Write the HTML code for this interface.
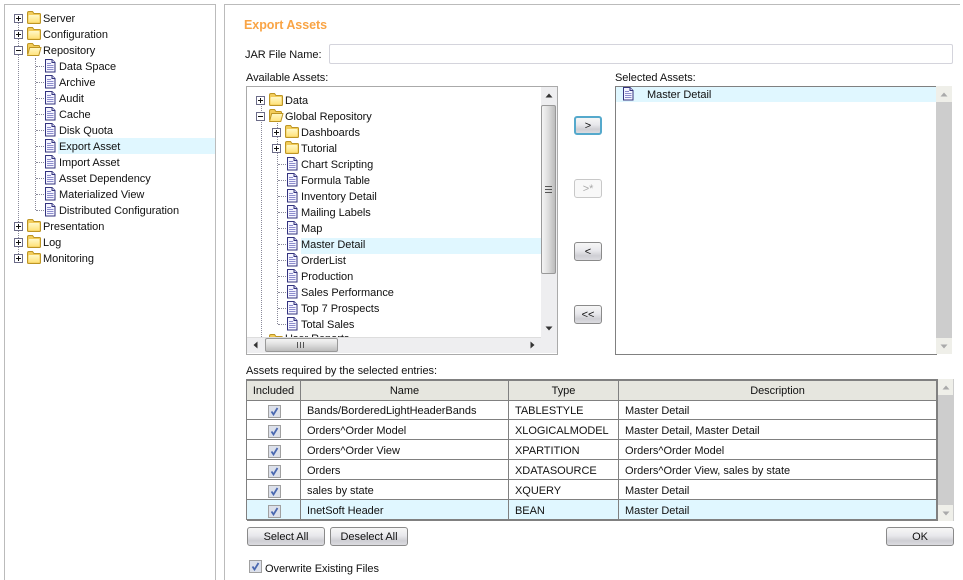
<!DOCTYPE html>
<html><head><meta charset="utf-8"><style>
*{box-sizing:border-box}
html,body{margin:0;padding:0;width:963px;height:580px;overflow:hidden;background:#fff}
body{position:relative;font:11px "Liberation Sans",sans-serif;color:#111;letter-spacing:-.04px}
.a,.t,.b,svg{position:absolute}
.t{white-space:nowrap;line-height:14px;height:14px;margin-top:1px}
.b{border:1px solid #8a8a8a;border-radius:3px;background:linear-gradient(#f6f6f6 0,#e8e8ec 45%,#cfcfd4 75%,#dcdce0 100%);text-align:center;line-height:19px}
.d{border-color:#c8c8c8;background:#f8f8f8;color:#aaa}
.v{border-left:1px dotted #8a8a9a;width:1px}
.h{border-top:1px dotted #8a8a9a;height:1px}
.th{background:#e6e6df;text-align:center;line-height:22px;height:20px;top:380px;white-space:nowrap}
.sb{background:#eeeef0}
.thumbV{background:linear-gradient(90deg,#f4f4f4,#e2e2e2 40%,#bcbcbc);border:1px solid #999;border-radius:2px}
.thumbH{background:linear-gradient(#f4f4f4,#e2e2e2 40%,#bcbcbc);border:1px solid #999;border-radius:2px}
.line{background:#808080}
</style></head><body>
<svg width="0" height="0" style="position:absolute"><defs>
<linearGradient id="gf" x1="0" y1="0" x2="0" y2="1"><stop offset="0" stop-color="#fff8c8"/><stop offset="1" stop-color="#ffe27a"/></linearGradient>
<g id="fo"><path d="M1.500 3Q1.500 1.500 3 1.500h3.500L8 3.500h5.500q1 0 1 1v8q0 1-1 1h-11q-1 0-1-1z" fill="#f2cc5a" stroke="#bd9524"/><rect x="2.500" y="5" width="11" height="7.500" rx="1" fill="url(#gf)"/></g>
<g id="fx"><path d="M1.500 12V3Q1.500 1.500 3 1.500h3.500L8 3.500h4.500q1 0 1 1v1" fill="#f2cc5a" stroke="#bd9524"/><path d="M1.500 13.500l2.200-8h11.300l-2.200 8z" fill="url(#gf)" stroke="#bd9524" stroke-linejoin="round"/></g>
<g id="dc"><path d="M.5.5h6.500l3 3v9.500H.5z" fill="#f4f4ff" stroke="#33337e"/><path d="M7 .5v3h3" fill="#dcdcf4" stroke="#33337e"/><path d="M2 4.500h4M2 6.500h6.500M2 8.500h6.500M2 10.500h6.500" stroke="#8c8ccc"/></g>
<g id="pl"><rect x=".5" y=".5" width="8" height="8" fill="#fff" stroke="#6c6c88"/><path d="M2 4.500h5M4.500 2v5" stroke="#111"/></g>
<g id="mi"><rect x=".5" y=".5" width="8" height="8" fill="#fff" stroke="#6c6c88"/><path d="M2 4.500h5" stroke="#111"/></g>
<g id="ck"><rect x=".5" y=".5" width="12" height="12" fill="#dce0ea" stroke="#a0a0a0"/><path d="M3.500 6.500l2 3L9.500 3" fill="none" stroke="#4a68b0" stroke-width="1.800"/></g>
</defs></svg>

<!-- left panel -->
<div class="a" style="left:4px;top:4px;width:212px;height:600px;border:1px solid #bbb"></div>
<div class="a" style="left:58px;top:138px;width:157px;height:16px;background:#e0f7ff"></div>
<div class="a v" style="left:18px;top:14px;height:244px"></div>
<div class="a v" style="left:35px;top:58px;height:152px"></div>
<div class="a h" style="left:36px;top:66px;width:8px"></div><div class="a h" style="left:36px;top:82px;width:8px"></div><div class="a h" style="left:36px;top:98px;width:8px"></div><div class="a h" style="left:36px;top:114px;width:8px"></div><div class="a h" style="left:36px;top:130px;width:8px"></div><div class="a h" style="left:36px;top:146px;width:8px"></div><div class="a h" style="left:36px;top:162px;width:8px"></div><div class="a h" style="left:36px;top:178px;width:8px"></div><div class="a h" style="left:36px;top:194px;width:8px"></div><div class="a h" style="left:36px;top:210px;width:8px"></div>

<svg style="left:14px;top:14px" width="9" height="9"><use href="#pl"/></svg><svg style="left:26px;top:10px" width="16" height="15"><use href="#fo"/></svg><div class="t" style="left:43px;top:11px">Server</div>
<svg style="left:14px;top:30px" width="9" height="9"><use href="#pl"/></svg><svg style="left:26px;top:26px" width="16" height="15"><use href="#fo"/></svg><div class="t" style="left:43px;top:27px">Configuration</div>
<svg style="left:14px;top:46px" width="9" height="9"><use href="#mi"/></svg><svg style="left:26px;top:42px" width="16" height="15"><use href="#fx"/></svg><div class="t" style="left:43px;top:43px">Repository</div>
<svg style="left:45px;top:59px" width="11" height="14"><use href="#dc"/></svg><div class="t" style="left:59px;top:59px">Data Space</div>
<svg style="left:45px;top:75px" width="11" height="14"><use href="#dc"/></svg><div class="t" style="left:59px;top:75px">Archive</div>
<svg style="left:45px;top:91px" width="11" height="14"><use href="#dc"/></svg><div class="t" style="left:59px;top:91px">Audit</div>
<svg style="left:45px;top:107px" width="11" height="14"><use href="#dc"/></svg><div class="t" style="left:59px;top:107px">Cache</div>
<svg style="left:45px;top:123px" width="11" height="14"><use href="#dc"/></svg><div class="t" style="left:59px;top:123px">Disk Quota</div>
<svg style="left:45px;top:139px" width="11" height="14"><use href="#dc"/></svg><div class="t" style="left:59px;top:139px">Export Asset</div>
<svg style="left:45px;top:155px" width="11" height="14"><use href="#dc"/></svg><div class="t" style="left:59px;top:155px">Import Asset</div>
<svg style="left:45px;top:171px" width="11" height="14"><use href="#dc"/></svg><div class="t" style="left:59px;top:171px">Asset Dependency</div>
<svg style="left:45px;top:187px" width="11" height="14"><use href="#dc"/></svg><div class="t" style="left:59px;top:187px">Materialized View</div>
<svg style="left:45px;top:203px" width="11" height="14"><use href="#dc"/></svg><div class="t" style="left:59px;top:203px">Distributed Configuration</div>
<svg style="left:14px;top:222px" width="9" height="9"><use href="#pl"/></svg><svg style="left:26px;top:218px" width="16" height="15"><use href="#fo"/></svg><div class="t" style="left:43px;top:219px">Presentation</div>
<svg style="left:14px;top:238px" width="9" height="9"><use href="#pl"/></svg><svg style="left:26px;top:234px" width="16" height="15"><use href="#fo"/></svg><div class="t" style="left:43px;top:235px">Log</div>
<svg style="left:14px;top:254px" width="9" height="9"><use href="#pl"/></svg><svg style="left:26px;top:250px" width="16" height="15"><use href="#fo"/></svg><div class="t" style="left:43px;top:251px">Monitoring</div>

<!-- right panel -->
<div class="a" style="left:224px;top:4px;width:736px;height:600px;border:1px solid #bbb;border-right:0"></div>
<div class="t" style="left:244px;top:17px;margin-top:0;font-size:12.500px;font-weight:bold;color:#f9a445;line-height:16px;height:16px">Export Assets</div>
<div class="t" style="left:245px;top:47px">JAR File Name:</div>
<div class="a" style="left:329px;top:44px;width:624px;height:20px;border:1px solid #d4d4dc;border-radius:2px"></div>

<div class="t" style="left:246px;top:70px">Available Assets:</div>
<div class="a" style="left:246px;top:86px;width:312px;height:269px;border:1px solid #aaa;overflow:hidden">
  <div class="a" style="left:54px;top:151px;width:240px;height:16px;background:#e0f7ff"></div>
</div>
<div class="a v" style="left:261px;top:96px;height:245px"></div>
<div class="a v" style="left:277px;top:120px;height:204px"></div>
<div class="a h" style="left:278px;top:164px;width:8px"></div><div class="a h" style="left:278px;top:180px;width:8px"></div><div class="a h" style="left:278px;top:196px;width:8px"></div><div class="a h" style="left:278px;top:212px;width:8px"></div><div class="a h" style="left:278px;top:228px;width:8px"></div><div class="a h" style="left:278px;top:244px;width:8px"></div><div class="a h" style="left:278px;top:260px;width:8px"></div><div class="a h" style="left:278px;top:276px;width:8px"></div><div class="a h" style="left:278px;top:292px;width:8px"></div><div class="a h" style="left:278px;top:308px;width:8px"></div><div class="a h" style="left:278px;top:324px;width:8px"></div>

<svg style="left:256px;top:96px" width="9" height="9"><use href="#pl"/></svg><svg style="left:268px;top:92px" width="16" height="15"><use href="#fo"/></svg><div class="t" style="left:285px;top:93px">Data</div>
<svg style="left:256px;top:112px" width="9" height="9"><use href="#mi"/></svg><svg style="left:268px;top:108px" width="16" height="15"><use href="#fx"/></svg><div class="t" style="left:285px;top:109px">Global Repository</div>
<svg style="left:272px;top:128px" width="9" height="9"><use href="#pl"/></svg><svg style="left:284px;top:124px" width="16" height="15"><use href="#fo"/></svg><div class="t" style="left:301px;top:125px">Dashboards</div>
<svg style="left:272px;top:144px" width="9" height="9"><use href="#pl"/></svg><svg style="left:284px;top:140px" width="16" height="15"><use href="#fo"/></svg><div class="t" style="left:301px;top:141px">Tutorial</div>
<svg style="left:287px;top:157px" width="11" height="14"><use href="#dc"/></svg><div class="t" style="left:301px;top:157px">Chart Scripting</div>
<svg style="left:287px;top:173px" width="11" height="14"><use href="#dc"/></svg><div class="t" style="left:301px;top:173px">Formula Table</div>
<svg style="left:287px;top:189px" width="11" height="14"><use href="#dc"/></svg><div class="t" style="left:301px;top:189px">Inventory Detail</div>
<svg style="left:287px;top:205px" width="11" height="14"><use href="#dc"/></svg><div class="t" style="left:301px;top:205px">Mailing Labels</div>
<svg style="left:287px;top:221px" width="11" height="14"><use href="#dc"/></svg><div class="t" style="left:301px;top:221px">Map</div>
<svg style="left:287px;top:237px" width="11" height="14"><use href="#dc"/></svg><div class="t" style="left:301px;top:237px">Master Detail</div>
<svg style="left:287px;top:253px" width="11" height="14"><use href="#dc"/></svg><div class="t" style="left:301px;top:253px">OrderList</div>
<svg style="left:287px;top:269px" width="11" height="14"><use href="#dc"/></svg><div class="t" style="left:301px;top:269px">Production</div>
<svg style="left:287px;top:285px" width="11" height="14"><use href="#dc"/></svg><div class="t" style="left:301px;top:285px">Sales Performance</div>
<svg style="left:287px;top:301px" width="11" height="14"><use href="#dc"/></svg><div class="t" style="left:301px;top:301px">Top 7 Prospects</div>
<svg style="left:287px;top:317px" width="11" height="14"><use href="#dc"/></svg><div class="t" style="left:301px;top:317px">Total Sales</div>
<svg style="left:268px;top:333px" width="16" height="4" viewBox="0 0 16 4"><use href="#fo"/></svg>
<div class="t" style="left:285px;top:331px;height:5px;overflow:hidden">User Reports</div>

<!-- tree scrollbars -->
<div class="a sb" style="left:541px;top:87px;width:16px;height:266px"></div>
<div class="a thumbV" style="left:541px;top:105px;width:15px;height:169px"></div>
<div class="a" style="left:545px;top:186px;width:7px;height:7px;border-top:1px solid #555;border-bottom:1px solid #555"></div>
<div class="a" style="left:545px;top:189px;width:7px;height:1px;background:#555"></div>
<svg style="left:545px;top:93px" width="8" height="5"><path d="M4 .5L7.500 4.500H.5z" fill="#333"/></svg>
<svg style="left:545px;top:326px" width="8" height="5"><path d="M4 4.500L7.500.5H.5z" fill="#333"/></svg>
<div class="a sb" style="left:247px;top:337px;width:294px;height:16px;border-top:1px solid #ddd"></div>
<div class="a thumbH" style="left:265px;top:338px;width:73px;height:14px"></div>
<div class="a" style="left:297px;top:342px;width:7px;height:6px;border-left:1px solid #555;border-right:1px solid #555"></div>
<div class="a" style="left:300px;top:342px;width:1px;height:6px;background:#555"></div>
<svg style="left:253px;top:341px" width="5" height="8"><path d="M.5 4L4.500.5v7z" fill="#333"/></svg>
<svg style="left:530px;top:341px" width="5" height="8"><path d="M4.500 4L.5.5v7z" fill="#333"/></svg>

<!-- move buttons -->
<div class="b" style="left:574px;top:116px;width:28px;height:19px;border:2px solid #55a9cc;line-height:17px">&gt;</div>
<div class="b d" style="left:574px;top:179px;width:28px;height:19px">&gt;*</div>
<div class="b" style="left:574px;top:242px;width:28px;height:19px">&lt;</div>
<div class="b" style="left:574px;top:305px;width:28px;height:19px">&lt;&lt;</div>

<!-- selected -->
<div class="t" style="left:615px;top:70px">Selected Assets:</div>
<div class="a" style="left:615px;top:86px;width:322px;height:269px;border:1px solid #808080;border-right:0"></div>
<div class="a" style="left:616px;top:87px;width:320px;height:15px;background:#e0f7ff"></div>
<svg style="left:623px;top:87px" width="11" height="14"><use href="#dc"/></svg>
<div class="t" style="left:647px;top:87px">Master Detail</div>
<div class="a" style="left:936px;top:86px;width:16px;height:268px;background:#cdcdcd"></div>
<div class="a sb" style="left:936px;top:86px;width:16px;height:16px;background:#efefe9"></div>
<div class="a sb" style="left:936px;top:338px;width:16px;height:16px;background:#efefe9"></div>
<svg style="left:940px;top:92px" width="8" height="5"><path d="M4 .5L7.500 4.500H.5z" fill="#aaa"/></svg>
<svg style="left:940px;top:344px" width="8" height="5"><path d="M4 4.500L7.500.5H.5z" fill="#aaa"/></svg>

<!-- table -->
<div class="t" style="left:246px;top:363px">Assets required by the selected entries:</div>
<div class="a" style="left:247px;top:500px;width:689px;height:20px;background:#e0f7ff"></div>
<div class="a th" style="left:247px;width:53px">Included</div>
<div class="a th" style="left:301px;width:207px">Name</div>
<div class="a th" style="left:509px;width:109px">Type</div>
<div class="a th" style="left:619px;width:317px">Description</div>
<div class="a line" style="left:247px;top:379px;width:691px;height:2px"></div>
<div class="a line" style="left:247px;top:400px;width:690px;height:1px"></div>
<div class="a line" style="left:247px;top:419px;width:690px;height:1px"></div>
<div class="a line" style="left:247px;top:439px;width:690px;height:1px"></div>
<div class="a line" style="left:247px;top:459px;width:690px;height:1px"></div>
<div class="a line" style="left:247px;top:479px;width:690px;height:1px"></div>
<div class="a line" style="left:247px;top:499px;width:690px;height:1px"></div>
<div class="a line" style="left:247px;top:519px;width:691px;height:2px"></div>
<div class="a line" style="left:246px;top:379px;width:1px;height:141px"></div>
<div class="a line" style="left:300px;top:380px;width:1px;height:140px"></div>
<div class="a line" style="left:508px;top:380px;width:1px;height:140px"></div>
<div class="a line" style="left:618px;top:380px;width:1px;height:140px"></div>
<div class="a line" style="left:936px;top:379px;width:2px;height:142px"></div>

<svg style="left:268px;top:405px" width="13" height="13"><use href="#ck"/></svg><div class="t" style="left:307px;top:403px">Bands/BorderedLightHeaderBands</div><div class="t" style="left:515px;top:403px">TABLESTYLE</div><div class="t" style="left:625px;top:403px">Master Detail</div>
<svg style="left:268px;top:425px" width="13" height="13"><use href="#ck"/></svg><div class="t" style="left:307px;top:423px">Orders^Order Model</div><div class="t" style="left:515px;top:423px">XLOGICALMODEL</div><div class="t" style="left:625px;top:423px">Master Detail, Master Detail</div>
<svg style="left:268px;top:445px" width="13" height="13"><use href="#ck"/></svg><div class="t" style="left:307px;top:443px">Orders^Order View</div><div class="t" style="left:515px;top:443px">XPARTITION</div><div class="t" style="left:625px;top:443px">Orders^Order Model</div>
<svg style="left:268px;top:465px" width="13" height="13"><use href="#ck"/></svg><div class="t" style="left:307px;top:463px">Orders</div><div class="t" style="left:515px;top:463px">XDATASOURCE</div><div class="t" style="left:625px;top:463px">Orders^Order View, sales by state</div>
<svg style="left:268px;top:485px" width="13" height="13"><use href="#ck"/></svg><div class="t" style="left:307px;top:483px">sales by state</div><div class="t" style="left:515px;top:483px">XQUERY</div><div class="t" style="left:625px;top:483px">Master Detail</div>
<svg style="left:268px;top:505px" width="13" height="13"><use href="#ck"/></svg><div class="t" style="left:307px;top:503px">InetSoft Header</div><div class="t" style="left:515px;top:503px">BEAN</div><div class="t" style="left:625px;top:503px">Master Detail</div>

<div class="a" style="left:938px;top:379px;width:16px;height:142px;background:#cdcdcd"></div>
<div class="a" style="left:938px;top:379px;width:15px;height:16px;background:#efefe9"></div>
<div class="a" style="left:938px;top:505px;width:15px;height:16px;background:#efefe9"></div>
<svg style="left:942px;top:385px" width="8" height="5"><path d="M4 .5L7.500 4.500H.5z" fill="#aaa"/></svg>
<svg style="left:942px;top:511px" width="8" height="5"><path d="M4 4.500L7.500.5H.5z" fill="#aaa"/></svg>

<div class="b" style="left:247px;top:527px;width:78px;height:19px">Select All</div>
<div class="b" style="left:330px;top:527px;width:78px;height:19px">Deselect All</div>
<div class="b" style="left:886px;top:527px;width:68px;height:19px">OK</div>
<svg style="left:249px;top:560px" width="13" height="13"><use href="#ck"/></svg>
<div class="t" style="left:265px;top:561px">Overwrite Existing Files</div>
</body></html>
